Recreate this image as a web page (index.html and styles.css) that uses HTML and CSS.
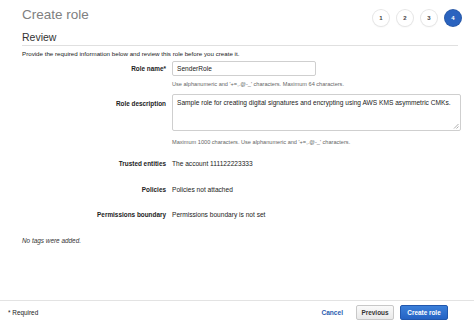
FILE: index.html
```html
<!DOCTYPE html>
<html>
<head>
<meta charset="utf-8">
<link rel="stylesheet" href="styles.css">
</head>
<body>
<div class="page">
  <div class="content">
    <div class="header">
      <h1 class="title">Create role</h1>
      <div class="steps">
        <span class="step">1</span>
        <span class="step">2</span>
        <span class="step">3</span>
        <span class="step active">4</span>
      </div>
    </div>
    <h2 class="section">Review</h2>
    <p class="intro">Provide the required information below and review this role before you create it.</p>
    <div class="form">
      <div class="row row-name">
        <div class="label">Role name*</div>
        <div class="value">
          <div class="input">SenderRole</div>
          <div class="help">Use alphanumeric and '+=,.@-_' characters. Maximum 64 characters.</div>
        </div>
      </div>
      <div class="row row-desc">
        <div class="label label-top">Role description</div>
        <div class="value">
          <div class="textarea">Sample role for creating digital signatures and encrypting using AWS KMS asymmetric CMKs.
            <svg class="grip" width="6" height="6" viewBox="0 0 6 6"><path d="M5.5 1L1 5.5M5.5 3.5L3.5 5.5" stroke="#999" stroke-width="0.8"/></svg>
          </div>
          <div class="help help-desc">Maximum 1000 characters. Use alphanumeric and '+=,.@-_' characters.</div>
        </div>
      </div>
      <div class="row row-plain">
        <div class="label">Trusted entities</div>
        <div class="value text">The account 111122223333</div>
      </div>
      <div class="row row-plain">
        <div class="label">Policies</div>
        <div class="value text">Policies not attached</div>
      </div>
      <div class="row row-plain">
        <div class="label">Permissions boundary</div>
        <div class="value text">Permissions boundary is not set</div>
      </div>
    </div>
    <p class="notags">No tags were added.</p>
  </div>
  <div class="footer">
    <span class="required">* Required</span>
    <div class="actions">
      <a class="cancel">Cancel</a>
      <button class="btn btn-secondary">Previous</button>
      <button class="btn btn-primary">Create role</button>
    </div>
  </div>
</div>
</body>
</html>
```
FILE: styles.css
```css
html, body {
  margin: 0;
  padding: 0;
  background: #fff;
}
body {
  font-family: "Liberation Sans", Arial, Helvetica, sans-serif;
  color: #333;
  width: 474px;
  height: 323px;
  overflow: hidden;
}
.page {
  display: flex;
  flex-direction: column;
  height: 323px;
}
.content {
  flex: 1;
  padding: 0 8px 0 22px;
}
.header {
  display: flex;
  align-items: flex-start;
  justify-content: space-between;
  height: 31px;
}
.title {
  margin: 7px 0 0;
  font-size: 13.5px;
  line-height: 16px;
  font-weight: normal;
  color: #808080;
}
.steps {
  display: flex;
  gap: 8px;
  padding-right: 5px;
  margin-top: 10px;
}
.step {
  width: 16px;
  height: 16px;
  border-radius: 50%;
  background: #fff;
  box-shadow: 0 0 0 1px #e6e6e6, 0 1px 2px rgba(0,0,0,0.08);
  display: flex;
  align-items: center;
  justify-content: center;
  font-size: 6px;
  font-weight: bold;
  color: #444;
}
.step.active {
  background: #2a63bf;
  color: #fff;
  box-shadow: 0 0 0 1px #2a5aa8;
}
.section {
  margin: 0 8px 0 0;
  font-size: 10.5px;
  font-weight: normal;
  color: #333;
  padding-bottom: 2px;
  border-bottom: 1px solid #e0e0e0;
  line-height: 12px;
}
.intro {
  margin: 4px 0 0;
  font-size: 6.2px;
  line-height: 8px;
  color: #222;
}
.form {
  margin-top: 3px;
}
.row {
  display: grid;
  grid-template-columns: 144px 1fr;
  column-gap: 6px;
}
.label {
  text-align: right;
  font-weight: bold;
  font-size: 6.4px;
  color: #222;
  align-self: start;
  line-height: 15px;
}
.label-top {
  line-height: 8px;
  padding-top: 6px;
}
.input {
  width: 144px;
  height: 15px;
  box-sizing: border-box;
  border: 1px solid #cfcfcf;
  border-radius: 2px;
  font-size: 6.6px;
  line-height: 13px;
  padding-left: 4px;
  color: #222;
}
.help {
  font-size: 5.6px;
  color: #666;
  line-height: 8px;
  margin-top: 4px;
}
.help-desc {
  margin-top: 7px;
}
.row-desc {
  margin-top: 6px;
}
.textarea {
  position: relative;
  width: 289px;
  height: 37px;
  box-sizing: border-box;
  border: 1px solid #cfcfcf;
  border-radius: 2px;
  font-size: 6.6px;
  line-height: 8px;
  padding: 4px 4px;
  color: #222;
}
.grip {
  position: absolute;
  right: 1px;
  bottom: 1px;
}
.row-plain {
  margin-top: 14px;
}
.row-plain + .row-plain {
  margin-top: 17.5px;
}
.row-plain .label {
  line-height: 8px;
}
.text {
  font-size: 6.6px;
  line-height: 8px;
  color: #222;
}
.notags {
  margin: 18px 0 0;
  font-size: 6.4px;
  font-style: italic;
  color: #333;
  line-height: 8px;
}
.footer {
  height: 21px;
  border-top: 1px solid #e3e3e3;
  display: flex;
  align-items: center;
  justify-content: space-between;
  padding: 1px 26px 0 8px;
  margin-bottom: 0;
}
.required {
  font-size: 6.4px;
  color: #222;
}
.actions {
  display: flex;
  align-items: center;
  gap: 6px;
}
.cancel {
  font-size: 6.6px;
  font-weight: bold;
  color: #2c60b0;
  margin-right: 7px;
}
.btn {
  font-family: inherit;
  font-size: 6.4px;
  font-weight: bold;
  height: 15px;
  border-radius: 2px;
  padding: 0;
  cursor: pointer;
}
.btn-secondary {
  width: 38px;
  background: linear-gradient(#fafafa, #e9e9e9);
  border: 1px solid #c8c8c8;
  color: #333;
}
.btn-primary {
  width: 48px;
  background: linear-gradient(#3b7fd9, #2563c4);
  border: 1px solid #2157ad;
  color: #fff;
}
```
